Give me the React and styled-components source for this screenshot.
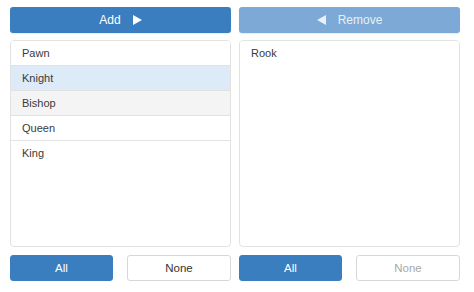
import React from "react";
import styled, { createGlobalStyle } from "styled-components";

const Global = createGlobalStyle`
  html, body { margin: 0; padding: 0; background: #fff; }
  body { font-family: "Liberation Sans", Arial, Helvetica, sans-serif; color: #333; }
`;

const Page = styled.div`
  display: grid;
  grid-template-columns: 221px 221px;
  column-gap: 8px;
  padding: 7px 0 0 10px;
`;

const Column = styled.div`
  display: flex;
  flex-direction: column;
`;

const MoveButton = styled.button`
  height: 26px;
  border: none;
  border-radius: 3px;
  background: ${(p) => (p.$disabled ? "#7ca9d5" : "#3b7ec0")};
  color: ${(p) => (p.$disabled ? "#e8f0f8" : "#fff")};
  font-family: inherit;
  font-size: 12px;
  display: flex;
  align-items: center;
  justify-content: center;
  gap: 12px;
  padding: 0;
  box-shadow: 0 1px 1px rgba(0,0,0,0.08);
`;

const List = styled.ul`
  list-style: none;
  margin: 7px 0 0;
  padding: 0;
  height: 207px;
  box-sizing: border-box;
  border: 1px solid #e2e2e2;
  border-radius: 4px;
  overflow: hidden;
`;

const Item = styled.li`
  height: 24px;
  line-height: 24px;
  padding-left: 11px;
  font-size: 11px;
  color: #3a3a3a;
  background: ${(p) => (p.$state === "selected" ? "#dcebf7" : p.$state === "hover" ? "#f4f4f4" : "#fff")};
  border-bottom: ${(p) => (p.$divided ? "1px solid #e2e2e2" : "none")};
`;

const Footer = styled.div`
  display: grid;
  grid-template-columns: 103px 104px;
  column-gap: 14px;
  margin-top: 8px;
`;

const SmallButton = styled.button`
  height: 26px;
  border-radius: 3px;
  font-family: inherit;
  font-size: 11.5px;
  padding: 0;
  border: 1px solid ${(p) => (p.$primary ? "#3b7ec0" : "#d8d8d8")};
  background: ${(p) => (p.$primary ? "#3b7ec0" : "#fff")};
  color: ${(p) => (p.$primary ? "#fff" : p.$disabled ? "#a8a8a8" : "#333")};
`;

const Tri = ({ dir }) => (
  <svg width="9" height="10" viewBox="0 0 9 10">
    {dir === "right" ? (
      <polygon points="0,0 9,5 0,10" fill="currentColor" />
    ) : (
      <polygon points="9,0 0,5 9,10" fill="currentColor" />
    )}
  </svg>
);

const left = [
  { name: "Pawn" },
  { name: "Knight", state: "selected" },
  { name: "Bishop", state: "hover" },
  { name: "Queen" },
  { name: "King" },
];

export default function App() {
  return (
    <>
      <Global />
      <Page>
        <Column>
          <MoveButton>
            <span>Add</span>
            <Tri dir="right" />
          </MoveButton>
          <List>
            {left.map((it, i) => (
              <Item key={it.name} $state={it.state} $divided={i < left.length - 1}>
                {it.name}
              </Item>
            ))}
          </List>
          <Footer>
            <SmallButton $primary>All</SmallButton>
            <SmallButton>None</SmallButton>
          </Footer>
        </Column>
        <Column>
          <MoveButton $disabled>
            <Tri dir="left" />
            <span>Remove</span>
          </MoveButton>
          <List>
            <Item>Rook</Item>
          </List>
          <Footer>
            <SmallButton $primary>All</SmallButton>
            <SmallButton $disabled>None</SmallButton>
          </Footer>
        </Column>
      </Page>
    </>
  );
}
